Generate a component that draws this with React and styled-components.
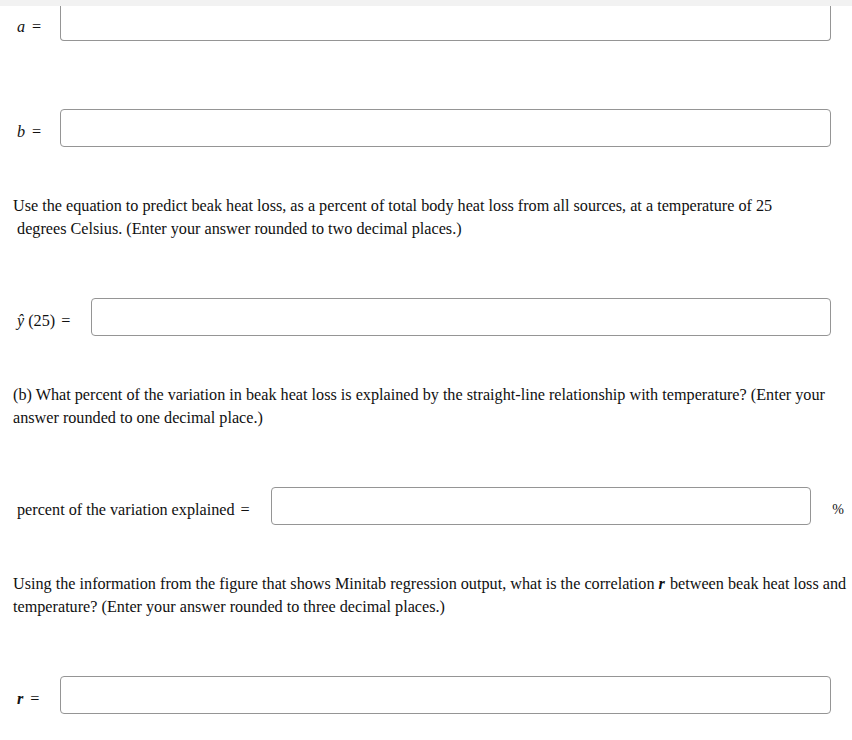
import styled, { createGlobalStyle } from "styled-components";

const Global = createGlobalStyle`
  html, body {
    margin: 0;
    padding: 0;
    background: #fff;
  }
  body {
    font-family: "Liberation Serif", "Times New Roman", serif;
    color: #111;
  }
`;

const TopStrip = styled.div`
  height: 6px;
  background: #f2f2f2;
`;

const Page = styled.div`
  padding: 0 4px 0 13px;
`;

const Row = styled.div`
  display: flex;
  align-items: center;
  height: ${(p) => p.h || 38}px;
  margin-top: ${(p) => p.mt || 0}px;
  padding-right: ${(p) => (p.unit ? 0 : 17)}px;
`;

const Label = styled.span`
  padding-left: 4px;
  margin-right: ${(p) => p.gap || 21}px;
  margin-top: ${(p) => p.shift ?? 8}px;
  font-family: "Liberation Serif", "Times New Roman", serif;
  font-size: 16.2px;
  white-space: nowrap;
`;

const Var = styled.i`
  font-family: "Liberation Serif", "Times New Roman", serif;
  font-weight: ${(p) => (p.bold ? 700 : 400)};
  padding-right: ${(p) => p.pr || 1}px;
`;

const Eq = styled.span`
  margin-left: 6px;
`;

const Field = styled.div`
  flex: 1;
  height: 100%;
  box-sizing: border-box;
  border: 1px solid #959595;
  border-radius: 4px;
  ${(p) =>
    p.cut &&
    `
    border-top: none;
    border-top-left-radius: 0;
    border-top-right-radius: 0;
  `}
`;

const Unit = styled.span`
  margin-left: 21px;
  margin-right: 4px;
  margin-top: 8px;
  font-size: 14px;
`;

const Para = styled.p`
  margin: ${(p) => p.mt}px 0 0;
  font-size: 16.2px;
  line-height: 23px;
`;

export default function App() {
  return (
    <>
      <Global />
      <TopStrip />
      <Page>
        <Row h={35}>
          <Label shift={7} gap={19}>
            <Var>a</Var>
            <Eq>=</Eq>
          </Label>
          <Field cut />
        </Row>
        <Row mt={68}>
          <Label gap={19}>
            <Var>b</Var>
            <Eq>=</Eq>
          </Label>
          <Field />
        </Row>
        <Para mt={48}>
          Use the equation to predict beak heat loss, as a percent of total body heat loss from all
          sources, at a temperature of 25
          <br />
          &nbsp;degrees Celsius. (Enter your answer rounded to two decimal places.)
        </Para>
        <Row mt={57}>
          <Label>
            <Var pr={4}>ŷ</Var>(25)<Eq>=</Eq>
          </Label>
          <Field />
        </Row>
        <Para mt={48}>
          (b) What percent of the variation in beak heat loss is explained by the straight-line
          relationship with temperature? (Enter your
          <br />
          answer rounded to one decimal place.)
        </Para>
        <Row mt={57} unit>
          <Label>
            percent of the variation explained<Eq>=</Eq>
          </Label>
          <Field />
          <Unit>%</Unit>
        </Row>
        <Para mt={48}>
          Using the information from the figure that shows Minitab regression output, what is the
          correlation <Var bold>r</Var> between beak heat loss and temperature? (Enter your answer
          rounded to three decimal places.)
        </Para>
        <Row mt={57}>
          <Label gap={21}>
            <Var bold>r</Var>
            <Eq>=</Eq>
          </Label>
          <Field />
        </Row>
      </Page>
    </>
  );
}
